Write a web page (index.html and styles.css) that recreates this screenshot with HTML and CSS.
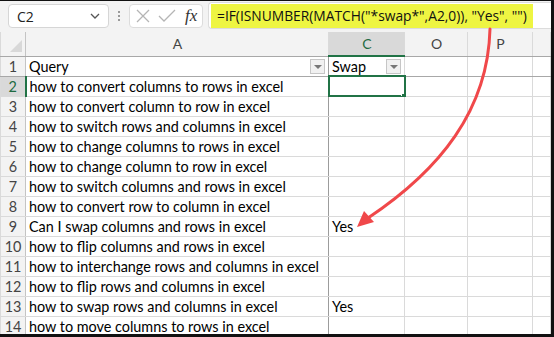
FILE: index.html
```html
<!DOCTYPE html>
<html lang="en">
<head>
  <meta charset="UTF-8">
  <title>Swap check</title>
  <link rel="stylesheet" href="styles.css">
</head>
<body>
<div class="frame">
  <div class="formula-bar">
    <div class="name-box">
      <span>C2</span>
      <svg class="chev" width="10" height="6" viewBox="0 0 10 6"><path d="M1 1 L5 5 L9 1" fill="none" stroke="#555" stroke-width="1.3"/></svg>
    </div>
    <div class="grip"><i></i><i></i><i></i></div>
    <div class="fx-box">
      <svg width="16" height="16" viewBox="0 0 16 16"><path d="M2 2 L14 14 M14 2 L2 14" stroke="#b5b5b5" stroke-width="1.3"/></svg>
      <svg width="18" height="16" viewBox="0 0 18 16"><path d="M1 8 L6 13 L17 2" fill="none" stroke="#b5b5b5" stroke-width="1.3"/></svg>
      <span class="fx">fx</span>
    </div>
    <div class="formula">
      <span class="formula-text">=IF(ISNUMBER(MATCH("*swap*",A2,0)), "Yes", "")</span>
    </div>
  </div>

  <table class="sheet">
    <colgroup>
      <col class="c-row"><col class="c-a"><col class="c-c"><col class="c-o"><col class="c-p"><col>
    </colgroup>
    <tr class="col-heads">
      <th class="corner"><span class="tri"></span></th>
      <th>A</th>
      <th class="sel-col">C</th>
      <th>O</th>
      <th>P</th>
      <th></th>
    </tr>
    <tr class="head-row">
      <th>1</th>
      <td class="a">Query<span class="filter"></span></td>
      <td class="c">Swap<span class="filter"></span></td>
      <td></td><td></td><td></td>
    </tr>
    <tr><th class="sel-row">2</th><td class="a">how to convert columns to rows in excel</td><td class="c active"><span class="handle"></span></td><td></td><td></td><td></td></tr>
    <tr><th>3</th><td class="a">how to convert column to row in excel</td><td class="c"></td><td></td><td></td><td></td></tr>
    <tr><th>4</th><td class="a">how to switch rows and columns in excel</td><td class="c"></td><td></td><td></td><td></td></tr>
    <tr><th>5</th><td class="a">how to change columns to rows in excel</td><td class="c"></td><td></td><td></td><td></td></tr>
    <tr><th>6</th><td class="a">how to change column to row in excel</td><td class="c"></td><td></td><td></td><td></td></tr>
    <tr><th>7</th><td class="a">how to switch columns and rows in excel</td><td class="c"></td><td></td><td></td><td></td></tr>
    <tr><th>8</th><td class="a">how to convert row to column in excel</td><td class="c"></td><td></td><td></td><td></td></tr>
    <tr><th>9</th><td class="a">Can I swap columns and rows in excel</td><td class="c">Yes</td><td></td><td></td><td></td></tr>
    <tr><th>10</th><td class="a">how to flip columns and rows in excel</td><td class="c"></td><td></td><td></td><td></td></tr>
    <tr><th>11</th><td class="a">how to interchange rows and columns in excel</td><td class="c"></td><td></td><td></td><td></td></tr>
    <tr><th>12</th><td class="a">how to flip rows and columns in excel</td><td class="c"></td><td></td><td></td><td></td></tr>
    <tr><th>13</th><td class="a">how to swap rows and columns in excel</td><td class="c">Yes</td><td></td><td></td><td></td></tr>
    <tr><th>14</th><td class="a">how to move columns to rows in excel</td><td class="c"></td><td></td><td></td><td></td></tr>
  </table>

  <!-- callout arrow from the formula down to the first match -->
  <svg class="arrow" width="554" height="337" viewBox="0 0 554 337">
    <path d="M490 29 C 488 110, 440 170, 368 218" fill="none" stroke="#f0484a" stroke-width="3" stroke-linecap="round"/>
    <path d="M357 227 L364 211 L374 222 Z" fill="#f0484a"/>
  </svg>
</div>
</body>
</html>
```
FILE: styles.css
```css
* {
  margin: 0;
  padding: 0;
  box-sizing: border-box;
}

body {
  width: 554px;
  height: 337px;
  overflow: hidden;
  background: #fff;
  font-family: "Open Sans", "Liberation Sans", sans-serif;
}

.frame {
  position: relative;
  width: 554px;
  height: 337px;
  overflow: hidden;
  border-top: 1px solid #111;
  border-right: 3px solid #111;
  border-bottom: 3px solid #111;
  background: #f3f3f3;
}

.formula-bar {
  height: 31px;
  display: flex;
  align-items: flex-start;
  padding: 3px 0 0 8px;
}

.name-box {
  width: 101px;
  height: 24px;
  background: #fff;
  border: 1px solid #d6d6d6;
  border-radius: 4px;
  display: flex;
  align-items: center;
  justify-content: space-between;
  padding: 0 8px 0 8px;
  font-size: 14px;
  color: #222;
}

.grip {
  width: 20px;
  height: 24px;
  display: flex;
  flex-direction: column;
  align-items: center;
  justify-content: center;
  gap: 2px;
}

.grip i {
  width: 2px;
  height: 2px;
  background: #9a9a9a;
}

.fx-box {
  width: 74px;
  height: 24px;
  background: #fff;
  border: 1px solid #dcdcdc;
  border-radius: 4px;
  display: flex;
  align-items: center;
  gap: 7px;
  padding-left: 5px;
}

.fx {
  font-family: "Liberation Serif", serif;
  font-style: italic;
  font-size: 17px;
  color: #333;
  margin-left: 2px;
}

.formula {
  flex: 1;
  height: 27px;
  margin-top: -2px;
  margin-left: 5px;
  background: #fff;
  border: 1px solid #dcdcdc;
  border-right: none;
  border-radius: 4px 0 0 4px;
  padding: 1px 0 0 2px;
}

.formula-text {
  display: inline-block;
  height: 24px;
  line-height: 24px;
  background: #eef542;
  padding: 0 6px 0 6px;
  font-size: 13.8px;
  color: #111;
}

.sheet {
  border-collapse: collapse;
  table-layout: fixed;
  width: 551px;
  background: #fff;
  font-family: Lato, "Open Sans", sans-serif;
  font-size: 14.4px;
  color: #000;
}

.c-row { width: 25px; }
.c-a { width: 303px; }
.c-c { width: 76px; }
.c-o { width: 63px; }
.c-p { width: 65px; }

.sheet td,
.sheet th {
  height: 20px;
  border: 1px solid #dadada;
  white-space: nowrap;
  overflow: hidden;
  padding: 0 2px 0 3px;
  font-weight: normal;
  text-align: left;
  position: relative;
}

.sheet tr > th:first-child {
  text-align: center;
  color: #444;
  background: #f3f3f3;
  padding: 0;
  border-right: 1px solid #c4c4c4;
}

.col-heads th {
  height: 24px;
  background: #f3f3f3;
  text-align: center !important;
  color: #444;
  font-size: 14px;
  border-top: none;
  border-color: #dadada;
  border-bottom: 1px solid #a8a8a8;
}

.col-heads .corner {
  position: relative;
}

.tri {
  position: absolute;
  right: 3px;
  bottom: 4px;
  width: 0;
  height: 0;
  border-left: 12px solid transparent;
  border-bottom: 12px solid #d8d8d8;
}

.col-heads .sel-col {
  background: #d9d9d9;
  color: #1e6b41;
  border-bottom: 2px solid #217346;
}

.sheet tr > th.sel-row {
  color: #1e6b41;
  background: #d9d9d9;
  border-right: 2px solid #217346;
}

.sheet td.a {
  border-right: 1px solid #9c9c9c;
}

.head-row td,
.head-row th {
  border-bottom: 1px solid #a8a8a8;
}

.filter {
  position: absolute;
  right: 3px;
  top: 2px;
  width: 15px;
  height: 15px;
  background: #f1f1f1;
  border: 1px solid #c6c6c6;
}

.filter::after {
  content: "";
  position: absolute;
  left: 3px;
  top: 5px;
  border-left: 4px solid transparent;
  border-right: 4px solid transparent;
  border-top: 4px solid #777;
}

.sheet td.active {
  outline: 2px solid #217346;
  outline-offset: -1px;
}

.handle {
  position: absolute;
  right: -3px;
  bottom: -3px;
  width: 6px;
  height: 6px;
  background: #217346;
  border: 1px solid #fff;
  z-index: 2;
}

.arrow {
  position: absolute;
  left: 0;
  top: -1px;
  pointer-events: none;
}
```
